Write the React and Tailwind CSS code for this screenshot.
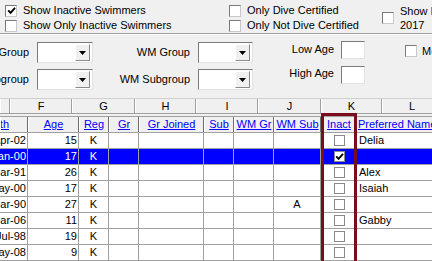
import React from "react";

const CheckMark = () => (
  <svg width="9" height="9" viewBox="0 0 9 9">
    <path d="M1.2 4.3 L3.6 6.8 L8 1.8" stroke="black" strokeWidth="1.9" fill="none" />
  </svg>
);

const Box = ({ checked }) => (
  <div className="w-[12px] h-[12px] shrink-0 bg-white border border-t-[#7a7a7a] border-l-[#7a7a7a] border-r-[#c8c8c8] border-b-[#c8c8c8] flex items-center justify-center">
    {checked && <CheckMark />}
  </div>
);

const Combo = ({ w }) => (
  <div className={`${w} shrink-0 h-[21px] bg-white border border-t-[#7a7a7a] border-l-[#7a7a7a] border-r-[#e3e3e3] border-b-[#e3e3e3] flex justify-end p-[1px] pr-[2px]`}>
    <div className="w-[15px] h-full bg-[#f0f0f0] border border-t-white border-l-white border-r-[#8a8a8a] border-b-[#8a8a8a] flex items-center justify-center">
      <svg width="7" height="4" viewBox="0 0 7 4">
        <path d="M0 0 H7 L3.5 4 Z" fill="black" />
      </svg>
    </div>
  </div>
);

const TextBox = () => (
  <div className="w-[24px] h-[18px] shrink-0 bg-white border border-t-[#7a7a7a] border-l-[#7a7a7a] border-r-[#e3e3e3] border-b-[#e3e3e3]" />
);

const rows = [
  { d: "Apr-02", age: 15, name: "Delia" },
  { d: "Jan-00", age: 17, name: "", inact: true, sel: true },
  { d: "Mar-91", age: 26, name: "Alex" },
  { d: "May-00", age: 17, name: "Isaiah" },
  { d: "Mar-90", age: 27, name: "", wm: "A" },
  { d: "Mar-06", age: 11, name: "Gabby" },
  { d: "Jul-98", age: 19, name: "" },
  { d: "May-08", age: 9, name: "" },
];

const letters = [
  { w: "w-[10px]", t: "" },
  { w: "w-[62px]", t: "F" },
  { w: "w-[63px]", t: "G" },
  { w: "w-[61px]", t: "H" },
  { w: "w-[62px]", t: "I" },
  { w: "w-[63px]", t: "J" },
  { w: "w-[61px]", t: "K" },
  { w: "w-[60px]", t: "L" },
];

const headers = [
  { w: "w-[28px]", t: "Birth", right: true },
  { w: "w-[51px]", t: "Age" },
  { w: "w-[30px]", t: "Reg" },
  { w: "w-[30px]", t: "Gr" },
  { w: "w-[65px]", t: "Gr Joined" },
  { w: "w-[30px]", t: "Sub" },
  { w: "w-[40px]", t: "WM Gr" },
  { w: "w-[47px]", t: "WM Sub" },
  { w: "w-[36px]", t: "Inact" },
];

const cell = "h-full shrink-0 border-r border-[#a0a0a0] overflow-hidden whitespace-nowrap flex items-center";

export default function App() {
  return (
    <div className="relative w-[432px] h-[261px] overflow-hidden bg-[#f0f0f0] font-['Liberation_Sans',Arial,sans-serif] text-[11px] leading-none text-black">
      {/* top checkbox section */}
      <div className="h-[34px] border-b border-[#a0a0a0] flex items-start pt-[3px] whitespace-nowrap">
        <div className="ml-[5px] w-[224px] shrink-0 flex flex-col">
          <div className="h-[15px] flex items-center gap-[6px]">
            <Box checked />
            <span>Show Inactive Swimmers</span>
          </div>
          <div className="h-[15px] flex items-center gap-[6px]">
            <Box />
            <span>Show Only Inactive Swimmers</span>
          </div>
        </div>
        <div className="w-[153px] shrink-0 flex flex-col">
          <div className="h-[15px] flex items-center gap-[6px]">
            <Box />
            <span>Only Dive Certified</span>
          </div>
          <div className="h-[15px] flex items-center gap-[6px]">
            <Box />
            <span>Only Not Dive Certified</span>
          </div>
        </div>
        <div className="h-[30px] shrink-0 flex items-center gap-[6px]">
          <Box />
          <div className="flex flex-col">
            <div className="h-[14px] flex items-center">Show Inactive in</div>
            <div className="h-[14px] flex items-center">2017</div>
          </div>
        </div>
      </div>
      <div className="h-px bg-white" />

      {/* filters */}
      <div className="h-[63px] flex items-start whitespace-nowrap">
        <div className="shrink-0 flex flex-col gap-[6px] pt-[7px]">
          <div className="flex items-center gap-[8px]">
            <div className="w-[29px] overflow-hidden flex justify-end">Group</div>
            <Combo w="w-[56px]" />
          </div>
          <div className="flex items-center gap-[8px]">
            <div className="w-[29px] overflow-hidden flex justify-end">Subgroup</div>
            <Combo w="w-[56px]" />
          </div>
        </div>
        <div className="shrink-0 flex flex-col gap-[6px] pt-[7px]">
          <div className="flex items-center gap-[8px]">
            <div className="w-[97px] flex justify-end">WM Group</div>
            <Combo w="w-[55px]" />
          </div>
          <div className="flex items-center gap-[8px]">
            <div className="w-[97px] flex justify-end">WM Subgroup</div>
            <Combo w="w-[55px]" />
          </div>
        </div>
        <div className="shrink-0 flex flex-col gap-[7px] pt-[6px]">
          <div className="flex items-center gap-[7px]">
            <div className="w-[81px] flex justify-end pb-[2px]">Low Age</div>
            <TextBox />
          </div>
          <div className="flex items-center gap-[7px]">
            <div className="w-[81px] flex justify-end pb-[3px]">High Age</div>
            <TextBox />
          </div>
        </div>
        <div className="shrink-0 ml-[40px] pt-[10px] flex items-center gap-[5px]">
          <Box />
          <span>Meet</span>
        </div>
      </div>

      {/* grid */}
      <div className="flex flex-col">
        <div className="h-[16px] flex border-y border-t-[#d0d0d0] border-b-[#a0a0a0] bg-[#f0f0f0]">
          {letters.map((l, i) => (
            <div key={i} className={`${l.w} shrink-0 h-full border-r border-[#a0a0a0] border-l border-l-white flex items-center justify-center`}>
              {l.t}
            </div>
          ))}
        </div>
        <div className="h-[2px] bg-[#f0f0f0]" />
        <div className="h-[17px] flex border-t border-[#a0a0a0] border-b border-b-[#a0a0a0] bg-[#f0f0f0]">
          {headers.map((h, i) => (
            <div key={i} className={`${h.w} shrink-0 h-full border-r border-[#6e6e6e] border-l border-l-white overflow-hidden whitespace-nowrap flex items-center ${h.right ? "justify-end pr-[18px]" : "justify-center"}`}>
              <span className="text-[#0000ff] underline">{h.t}</span>
            </div>
          ))}
          <div className="flex-1 h-full overflow-hidden whitespace-nowrap flex items-center pl-[1px]">
            <span className="text-[#0000ff] underline">Preferred Name</span>
          </div>
        </div>
        {rows.map((r, i) => (
          <div key={i} className={`h-[16px] shrink-0 flex border-b border-[#a0a0a0] ${r.sel ? "bg-[#0000ff] text-white" : "bg-white"}`}>
            <div className={`w-[28px] ${cell} justify-end pr-[1px]`}>{r.d}</div>
            <div className={`w-[51px] ${cell} justify-end pr-[1px]`}>{r.age}</div>
            <div className={`w-[30px] ${cell} justify-center`}>K</div>
            <div className={`w-[30px] ${cell}`} />
            <div className={`w-[65px] ${cell}`} />
            <div className={`w-[30px] ${cell}`} />
            <div className={`w-[40px] ${cell}`} />
            <div className={`w-[47px] ${cell} justify-center`}>{r.wm || ""}</div>
            <div className={`w-[36px] ${cell} justify-center pl-[1px]`}>
              <div className="w-[11px] h-[11px] bg-white border border-[#8a8a8a] flex items-center justify-center">
                {r.inact && <CheckMark />}
              </div>
            </div>
            <div className="flex-1 h-full overflow-hidden whitespace-nowrap flex items-center pl-[2px]">{r.name}</div>
          </div>
        ))}
      </div>

      {/* highlight annotation */}
      <div className="absolute left-[321px] top-[113px] w-[36px] h-[160px] border-[3px] border-[#7a0d1c] pointer-events-none" />
    </div>
  );
}
